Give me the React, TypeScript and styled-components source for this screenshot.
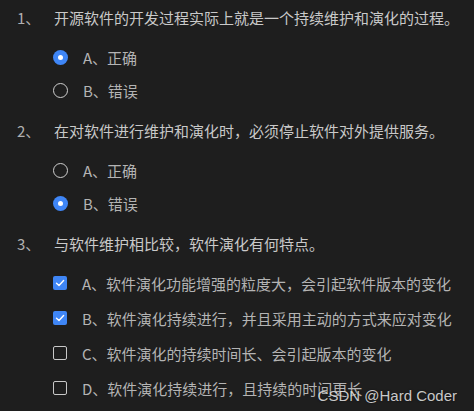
import styled, { createGlobalStyle } from 'styled-components'

const questions = [
  {
    no: '1、',
    text: '开源软件的开发过程实际上就是一个持续维护和演化的过程。',
    kind: 'radio',
    options: [
      { label: 'A、正确', checked: true },
      { label: 'B、错误', checked: false },
    ],
  },
  {
    no: '2、',
    text: '在对软件进行维护和演化时，必须停止软件对外提供服务。',
    kind: 'radio',
    options: [
      { label: 'A、正确', checked: false },
      { label: 'B、错误', checked: true },
    ],
  },
  {
    no: '3、',
    text: '与软件维护相比较，软件演化有何特点。',
    kind: 'check',
    options: [
      { label: 'A、软件演化功能增强的粒度大，会引起软件版本的变化', checked: true },
      { label: 'B、软件演化持续进行，并且采用主动的方式来应对变化', checked: true },
      { label: 'C、软件演化的持续时间长、会引起版本的变化', checked: false },
      { label: 'D、软件演化持续进行，且持续的时间更长', checked: false },
    ],
  },
]

export default function App() {
  return (
    <>
      <GlobalStyle />
      <Page>
        {questions.map((q) => (
          <Question key={q.no}>
            <QuestionRow>
              <Number>{q.no}</Number>
              <QuestionText>{q.text}</QuestionText>
            </QuestionRow>
            <Options $tight={q.kind === 'radio'}>
              {q.options.map((o) => (
                <Option key={o.label}>
                  {q.kind === 'radio' ? <Radio $on={o.checked} /> : <Check $on={o.checked}>{o.checked && <Tick />}</Check>}
                  <OptionText>{o.label}</OptionText>
                </Option>
              ))}
            </Options>
          </Question>
        ))}
        <Watermark>CSDN @Hard Coder</Watermark>
      </Page>
    </>
  )
}

function Tick() {
  return (
    <svg width="10" height="10" viewBox="0 0 10 10">
      <path d="M1.5 5.2 L4 7.5 L8.6 2.6" fill="none" stroke="#fff" strokeWidth="1.4" strokeLinecap="round" strokeLinejoin="round" />
    </svg>
  )
}

const GlobalStyle = createGlobalStyle`
  html, body {
    margin: 0;
    background: #1e1e1e;
  }
`
const Page = styled.div`
  position: relative;
  width: 474px;
  height: 411px;
  overflow: hidden;
  box-sizing: border-box;
  padding-top: 7px;
  display: flex;
  flex-direction: column;
  gap: 20px;
  background: #1e1e1e;
  font-family: "Noto Sans CJK SC", "Noto Sans", sans-serif;
  font-size: 15px;
`
const Question = styled.div`
  display: flex;
  flex-direction: column;
  gap: 20px;
`
const QuestionRow = styled.div`
  display: flex;
  align-items: center;
  height: 20px;
`
const Number = styled.span`
  width: 54px;
  padding-left: 17px;
  box-sizing: border-box;
  color: #b0b0b0;
`
const QuestionText = styled.span`
  color: #c9c9c9;
  white-space: nowrap;
`
const Options = styled.div<{ $tight: boolean }>`
  display: flex;
  flex-direction: column;
  gap: ${(p) => (p.$tight ? '13px' : '15px')};
  padding-left: 53px;
`
const Option = styled.div`
  display: flex;
  align-items: center;
  height: 20px;
  gap: 15px;
`
const Radio = styled.span<{ $on: boolean }>`
  width: 15px;
  height: 15px;
  box-sizing: border-box;
  border-radius: 50%;
  flex-shrink: 0;
  background: ${(p) => (p.$on ? '#3f86f6' : 'transparent')};
  border: ${(p) => (p.$on ? 'none' : '1.5px solid #cfcfcf')};
  display: flex;
  align-items: center;
  justify-content: center;
  &::after {
    content: '';
    display: ${(p) => (p.$on ? 'block' : 'none')};
    width: 5px;
    height: 5px;
    border-radius: 50%;
    background: #fff;
  }
`
const Check = styled.span<{ $on: boolean }>`
  width: 14px;
  height: 14px;
  box-sizing: border-box;
  border-radius: 2px;
  flex-shrink: 0;
  background: ${(p) => (p.$on ? '#3f86f6' : 'transparent')};
  border: ${(p) => (p.$on ? 'none' : '1.5px solid #c8c8c8')};
  display: flex;
  align-items: center;
  justify-content: center;
`
const OptionText = styled.span`
  color: #b4b4b4;
  white-space: nowrap;
`
const Watermark = styled.div`
  position: absolute;
  right: 17px;
  bottom: 7px;
  font-family: "Liberation Sans", Arial, sans-serif;
  font-size: 15px;
  color: rgba(235, 235, 235, 0.85);
  text-shadow: 0 0 2px rgba(0, 0, 0, 0.6);
`
